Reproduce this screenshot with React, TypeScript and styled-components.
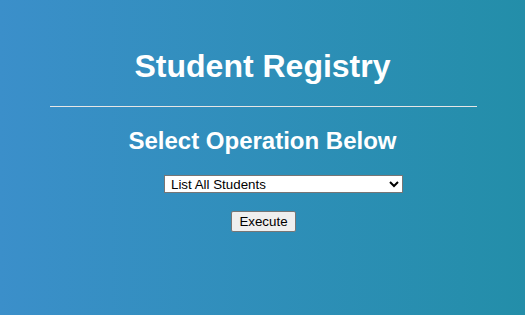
import styled, { createGlobalStyle } from 'styled-components';

const GlobalStyle = createGlobalStyle`
  html, body {
    margin: 0;
    padding: 0;
    height: 100%;
  }
  body {
    font-family: "Liberation Sans", Arial, sans-serif;
    background: linear-gradient(to right, #3b8fca, #238ea9);
    min-height: 315px;
  }
`

export default function App() {
  return (
    <>
      <GlobalStyle />
      <Page>
        <Title>Student Registry</Title>
        <Rule />
        <SubTitle>Select Operation Below</SubTitle>
        <Form>
          <Select defaultValue="list">
            <option value="list">List All Students</option>
            <option value="add">Add Student</option>
            <option value="delete">Delete Student</option>
          </Select>
          <Button type="button">Execute</Button>
        </Form>
      </Page>
    </>
  )
}

const Page = styled.div`
  display: flex;
  flex-direction: column;
  align-items: center;
  padding-top: 48px;
  color: #fff;
`
const Title = styled.h1`
  margin: 0;
  font-size: 32px;
  font-weight: bold;
  line-height: 37px;
`
const Rule = styled.hr`
  width: 427px;
  margin: 21px 0 0 1px;
  border: none;
  border-top: 1px solid #e6e6e6;
  height: 0;
`
const SubTitle = styled.h2`
  margin: 20px 0 0;
  font-size: 24px;
  font-weight: bold;
  line-height: 28px;
`
const Form = styled.div`
  display: flex;
  flex-direction: column;
  align-items: center;
  margin-top: 20px;
`
const Select = styled.select`
  width: 239px;
  height: 18px;
  font-family: "Liberation Sans", Arial, sans-serif;
  font-size: 13.33px;
  margin-left: 42px;
  border: 1px solid #767676;
  background: #fff;
  color: #000;
  padding: 0 0 0 2px;
`
const Button = styled.button`
  margin-top: 18px;
  margin-left: 2px;
  height: 21px;
  padding: 1px 7px;
  font-family: "Liberation Sans", Arial, sans-serif;
  font-size: 13.33px;
  color: #000;
  background: #efefef;
  border: 1px solid #767676;
  border-radius: 2px;
`
